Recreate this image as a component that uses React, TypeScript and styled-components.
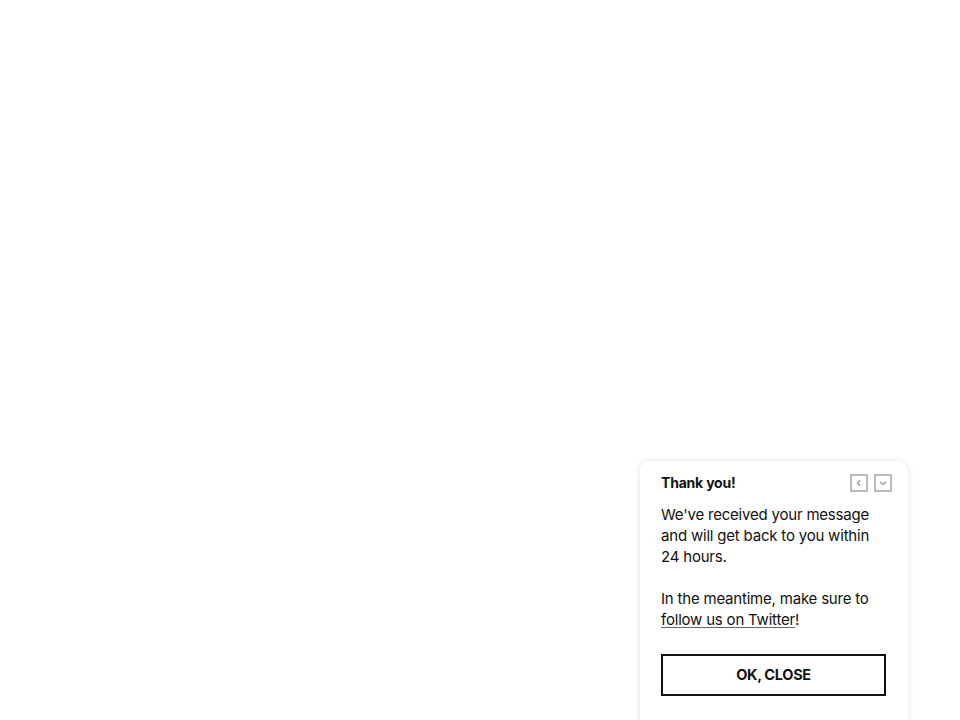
import React from "react";
import styled, { createGlobalStyle } from "styled-components";

const Global = createGlobalStyle`
  html, body { margin: 0; padding: 0; background: #fff; }
  body { font-family: "Inter", "Noto Sans", sans-serif; color: #111; }
`;

const Page = styled.div`
  height: 100vh;
  overflow: hidden;
  display: flex;
  flex-direction: column;
  align-items: flex-end;
  padding: 461px 52px 0 0;
  box-sizing: border-box;
`;

const Panel = styled.div`
  width: 268px;
  box-sizing: border-box;
  padding: 13px 22px 40px 21px;
  background: #fff;
  border-radius: 10px;
  box-shadow: 0 0 6px rgba(0, 0, 0, 0.12);
`;

const Header = styled.div`
  display: flex;
  align-items: center;
  height: 18px;
`;

const Title = styled.div`
  flex: 1;
  font-size: 14px;
  font-weight: 700;
  letter-spacing: -0.2px;
  padding-bottom: 1px;
`;

const Controls = styled.div`
  display: flex;
  gap: 6px;
  margin-right: -6px;
`;

const IconBox = styled.button`
  width: 18px;
  height: 18px;
  box-sizing: border-box;
  border: 2px solid #bababa;
  background: #fff;
  padding: 0;
  display: flex;
  align-items: center;
  justify-content: center;
  color: #999;
`;

const Body = styled.div`
  margin-top: 12px;
  font-size: 15px;
  line-height: 21px;
  letter-spacing: -0.2px;
`;

const Para = styled.p`
  margin: 0 0 21px;
  &:last-child { margin-bottom: 0; }
`;

const Link = styled.a`
  color: #111;
  text-decoration: underline;
  text-decoration-color: #666;
  text-underline-offset: 2px;
`;

const Button = styled.button`
  margin-top: 24px;
  width: 225px;
  height: 42px;
  box-sizing: border-box;
  border: 2px solid #111;
  background: #fff;
  padding: 0 0 2px;
  font-family: "Inter", "Noto Sans", sans-serif;
  font-size: 14.5px;
  font-weight: 700;
  color: #111;
  letter-spacing: -0.3px;
`;

export default function App() {
  return (
    <>
      <Global />
      <Page>
        <Panel>
          <Header>
            <Title>Thank you!</Title>
            <Controls>
              <IconBox aria-label="previous">
                <svg width="8" height="8" viewBox="0 0 8 8" fill="none" stroke="currentColor" strokeWidth="1.3">
                  <path d="M5.2 1.2L2.4 4L5.2 6.8" />
                </svg>
              </IconBox>
              <IconBox aria-label="minimize">
                <svg width="8" height="8" viewBox="0 0 8 8" fill="none" stroke="currentColor" strokeWidth="1.3">
                  <path d="M1.2 2.8L4 5.6L6.8 2.8" />
                </svg>
              </IconBox>
            </Controls>
          </Header>
          <Body>
            <Para>We've received your message and will get back to you within 24 hours.</Para>
            <Para>
              In the meantime, make sure to <Link href="#">follow us on Twitter</Link>!
            </Para>
          </Body>
          <Button>OK, CLOSE</Button>
        </Panel>
      </Page>
    </>
  );
}
